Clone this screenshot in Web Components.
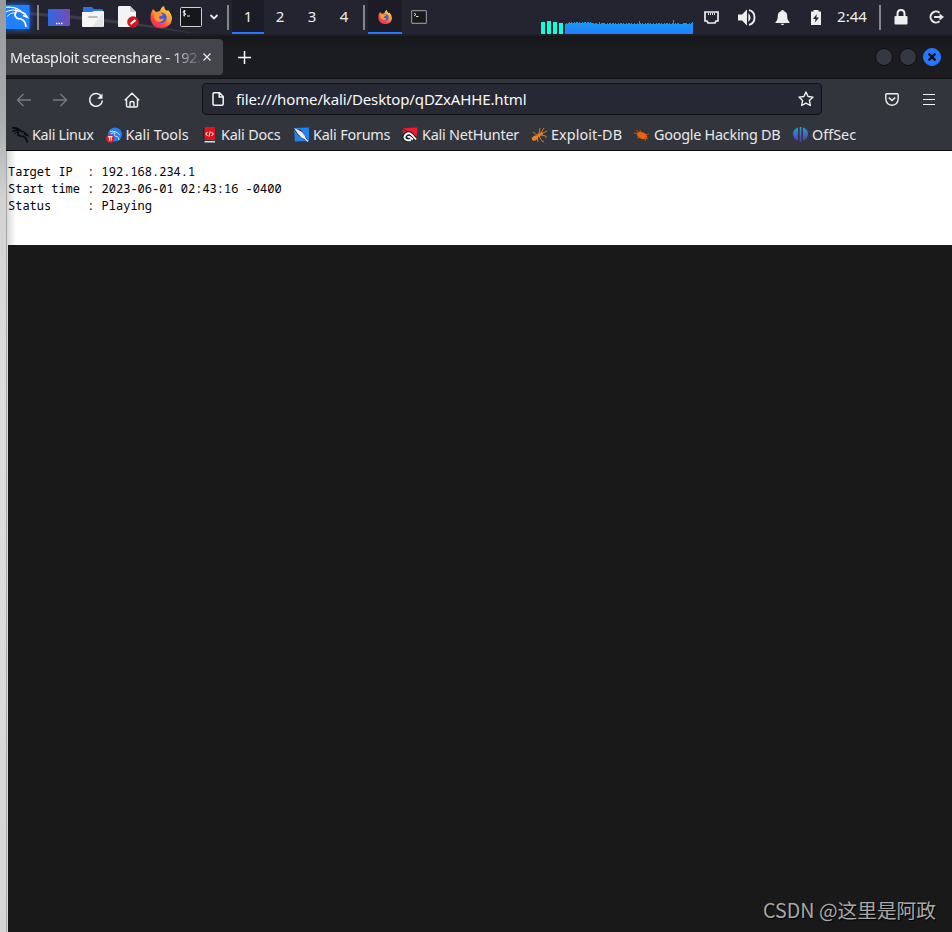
<!DOCTYPE html>
<html lang="en">
<head>
<meta charset="utf-8">
<title>Metasploit screenshare</title>
<style>
  html, body { margin: 0; height: 100%; overflow: hidden; }
  body { font-family: "Noto Sans", "Open Sans", sans-serif; background: #1a1a1a; }
</style>
</head>
<body>
<kali-desktop></kali-desktop>

<script>
const ICONS = {
  kali: [24, 24, `<rect width="23.500" height="24" fill="#2180ff"/>
    <path d="M0 2.200Q8 1.800 12 4.300L15 6M0 6.700Q5 4.500 9 5.200" fill="none" stroke="#fff" stroke-width="1.100"/>
    <path d="M9 5.200Q15 6 19 9L21 12 17 10.500M10.500 6.500Q7.500 10 10.500 12.700 12 13.800 15 14 19.500 15.500 20 22" fill="none" stroke="#fff" stroke-width="1.700"/>
    <path d="M1 11.500Q4 7.500 9.500 7.500" fill="none" stroke="#fff" stroke-width=".9"/>`],
  desktop: [22, 17, `<defs><linearGradient id="d"><stop stop-color="#2f6ae0"/><stop offset="1" stop-color="#754bb6"/></linearGradient></defs>
    <rect width="22" height="17" rx="1" fill="url(#d)"/><path d="M8 14.500h1.500M10.500 14.500H12M13 14.500h1.500" stroke="#fff" stroke-width="1.500"/>`],
  folder: [22, 20, `<path d="M1 0h9l2 2h8q1 0 1 1v5H1z" fill="#2b72e8"/><path d="M0 5h10l2-1h9q1 0 1 1v14q0 1-1 1H1q-1 0-1-1z" fill="#f5f5f5"/><path d="M21 6v14H10z" fill="#e4e4e4"/><path d="M7 10h8" stroke="#bbb" stroke-width="2" stroke-linecap="round"/>`],
  doc: [22, 22, `<path d="M1 0h11l6 6v15H1q-1 0-1-1V1z" fill="#f4f4f4"/><path d="M12 0v6h6z" fill="#c9c9c9"/><circle cx="15" cy="16" r="5.800" fill="#cf1820"/><path d="M12.500 18l5-4" stroke="#fff" stroke-width="2.200"/>`],
  firefox: [22, 22, `<defs><linearGradient id="f" x1=".9" x2=".2" y2="1"><stop stop-color="#ffe04b"/><stop offset=".45" stop-color="#ff9830"/><stop offset=".75" stop-color="#ff4144"/><stop offset="1" stop-color="#e92a6a"/></linearGradient></defs>
    <path d="M3 3l3 3 4-1Q11 1 14 0q0 3 3 5l1-1q4 4 4 9-1 8-9 9Q2 23 .5 13 .3 7 3 3z" fill="url(#f)"/>
    <circle cx="11.500" cy="11.700" r="5.200" fill="#405bdd"/><path d="M3 6l4 1h4l2 2-2 1q-2 0-2 2 2 2 5 0-1 4-5 4-5-1-5-6z" fill="#ff9633"/>`],
  terminal: [22, 20, `<rect x=".5" y=".5" width="21" height="19" rx="1" fill="#15171a" stroke="#cfcfcf"/><path d="M5.600 4Q3 3.800 3 5q0 1 1.300 1T5.600 7.500Q5.400 8.500 3 8M4.300 3v6.500M7 9h3" fill="none" stroke="#fff" stroke-width=".9"/>`],
  taskterm: [16, 14, `<rect x=".6" y=".6" width="14.800" height="12.800" rx="1" fill="#17191b" stroke="#8b8d8d" stroke-width="1.200"/><path d="M3 3l2 1.500-2 1.500M5 6.500h2.500" fill="none" stroke="#ddd"/>`],
  chevron: [10, 8, `<path d="M1.500 2L5 5.500 8.500 2" fill="none" stroke="#e8e8e8" stroke-width="1.800"/>`],
  network: [15, 13, `<path d="M1 1h13v9h-2l-1 2H4l-1-2H1z" fill="none" stroke="#eee" stroke-width="1.700"/><path d="M4.500 2v2M6.500 2v2M8.500 2v2M10.500 2v2" stroke="#ddd"/>`],
  volume: [18, 17, `<path d="M0 5.500h4l5-5v16l-5-5H0z" fill="#eee"/><path d="M10.300 4q4.500 4.500 0 9z" fill="#eee"/><path d="M11 1.200q5.500 1.300 5.500 7.300T11 15.800" fill="none" stroke="#eee" stroke-width="1.900"/>`],
  bell: [15, 15, `<path d="M7.500 0q1.300 0 1.300 1.200Q12.200 2 12.200 6q0 4.500 2.300 6v1H.5v-1Q2.800 10.500 2.800 6q0-4 3.400-4.800Q6.200 0 7.500 0zM5.500 13.800h4q-.5 1.200-2 1.200t-2-1.200z" fill="#eee"/>`],
  battery: [10, 15, `<path d="M2.500 0h5v1.500H10V15H0V1.500h2.500z" fill="#eee"/><path d="M5.800 4L2 9h2.500L4 12.500 8 7.500H5.400z" fill="#23232f"/>`],
  lock: [14, 16, `<path d="M3.500 8V5q0-4 3.500-4t3.500 4v3" fill="none" stroke="#eee" stroke-width="2"/><rect x=".5" y="7" width="13" height="8.500" rx="1" fill="#eee"/>`],
  logout: [15, 14, `<path d="M10.500 2.700A5.500 5.500 0 1 0 10.500 11.300" fill="none" stroke="#e8e8e8" stroke-width="2"/><path d="M5 7h7" stroke="#e8e8e8" stroke-width="2"/><path d="M10.500 3.500L15 7l-4.500 3.500z" fill="#e8e8e8"/>`],
  back: [16, 14, `<path d="M15 7H1.500M7.500 1l-6 6 6 6" fill="none" stroke="#77797e" stroke-width="1.400"/>`],
  forward: [16, 14, `<path d="M1 7h13.500M8.500 1l6 6-6 6" fill="none" stroke="#77797e" stroke-width="1.400"/>`],
  reload: [16, 16, `<path d="M13.500 4.500A6.400 6.400 0 1 0 14.400 8.500" fill="none" stroke="#f2f2f2" stroke-width="1.500"/><path d="M14.500 1.500v5.300H9.200z" fill="#f2f2f2"/>`],
  home: [16, 16, `<path d="M.8 8.300L8 1.200l7.200 7.100M2.500 7v6.700q0 1.300 1.300 1.300h8.400q1.300 0 1.300-1.300V7M6 15v-4q0-1.500 2-1.500t2 1.500v4" fill="none" stroke="#f2f2f2" stroke-width="1.400"/>`],
  page: [12, 14, `<path d="M1 2q0-1.200 1.200-1.200h5.300L11.200 4.500V12q0 1.200-1.200 1.200H2.200Q1 13.200 1 12zM7.200 1v4h4" fill="none" stroke="#f5f5f5" stroke-width="1.500"/>`],
  star: [16, 16, `<path d="M8 1l2.100 4.500 4.900.6-3.600 3.400.9 5L8 12.100l-4.300 2.400.9-5L1 6.100l4.900-.6z" fill="none" stroke="#f2f2f2" stroke-width="1.400" stroke-linejoin="round"/>`],
  pocket: [14, 13, `<path d="M2 .8h10q1.200 0 1.200 1.200v4q-.5 6-6.200 6.200Q1.300 12 .8 6V2Q.8.800 2 .8z" fill="none" stroke="#f2f2f2" stroke-width="1.400"/><path d="M3.800 4.500L7 7.500l3.200-3" fill="none" stroke="#f2f2f2" stroke-width="1.600"/>`],
  menu: [12, 11, `<path d="M0 .5h12M0 5.500h12M0 10.500h12" stroke="#f2f2f2" stroke-width="1.200"/>`],
  plus: [13, 13, `<path d="M6.500 0v13M0 6.500h13" stroke="#fff" stroke-width="1.500"/>`],
  close: [8, 8, `<path d="M.5.500l7 7M7.500.500l-7 7" stroke="#eee" stroke-width="1.200"/>`],
  dragon: [16, 16, `<path d="M0 1Q4 .5 6 2L9 4M.5 4.500Q5 2.500 8 3.500 12 4.500 15 8L12 7M6.500 4.500Q4.500 7.500 7.500 8.700 9 9.300 11 9.300 15 11 15 15.500" fill="none" stroke="#08090b" stroke-width="1.600"/><path d="M2 7Q4 5 7 5" fill="none" stroke="#08090b"/>`],
  tools: [16, 16, `<circle cx="9" cy="7.500" r="7" fill="#267df0"/><path d="M4 4.500Q9 3 14 8M4 7.500Q7 5 9 6 7.500 9.500 11 9.500 13 10 13 13" fill="none" stroke="#c9e3ff"/><circle cx="4.200" cy="11.500" r="4.200" fill="#e01f2a"/><path d="M2 9.700h4.500M3.500 9.700v4M5.200 9.700v4" stroke="#fff"/>`],
  docs: [12, 16, `<path d="M0 1l2-1v15l-2-1z" fill="#28203c"/><path d="M1.500 0H12v13H1.500z" fill="#df151d"/><path d="M1.500 14H12v1.500H1.500z" fill="#ddd"/><path d="M4.500 5L2.700 7l1.800 2M7.200 4.500L6 9.500M8.500 5l1.800 2-1.800 2" fill="none" stroke="#fff"/>`],
  forums: [16, 16, `<path d="M1 1L16 .5V14L2 14.500z" fill="#2381f4"/><path d="M0 1l8 2 4 6 4 6-6-3-5-4z" fill="#20242d"/><path d="M1 1l3.500 1.500L9 5l3 4 .8 3.500L9 11 5 7z" fill="#eee"/><path d="M11 10.500l4 4" stroke="#eee" stroke-width="1.200"/>`],
  hunter: [16, 16, `<path d="M1 1L15.500.5 14.500 11z" fill="#ed1c35"/><path d="M0 2l5 3-3 3z" fill="#ed1c35"/><path d="M8.500 13H5Q2 12.500 2.500 9.500 4 5.500 8 6.500L13.500 12" fill="none" stroke="#10151b" stroke-width="4.200"/><path d="M9 13.300H5.500Q2 12.700 2.500 9.500 4.300 5.500 8 6.500 10 7.500 14 12.500M5.500 10Q7.500 9 9 11L11 12.500" fill="none" stroke="#fff" stroke-width="1.900"/>`],
  exploit: [16, 16, `<g fill="#e58422"><ellipse cx="4" cy="11" rx="3.500" ry="2.200" transform="rotate(-30 4 11)"/><circle cx="8" cy="8" r="1.800"/><circle cx="10.500" cy="6.500" r="1.500"/></g><path d="M6 8L2 5M8 7l1-6M10 6l3-5M10 7l6-3M9 8l6 1v2M8 9l3 5 2 1M6 9l1 6" fill="none" stroke="#e58422" stroke-width=".9"/>`],
  bug: [16, 12, `<ellipse cx="8" cy="6.500" rx="5.500" ry="3.200" transform="rotate(25 8 6.500)" fill="#f0600d"/><path d="M4 5L0 4M5 4L2 1M7 4L6 1M11 6l4-1M11 8l3 2M10 9l2 3M6 8l-3 1" stroke="#c9520f" stroke-width=".9"/>`],
  offsec: [15, 15, `<defs><linearGradient id="o" gradientUnits="userSpaceOnUse" x1="0" x2="0" y1="0" y2="15"><stop stop-color="#16a8c9"/><stop offset="1" stop-color="#5d2dc4"/></linearGradient></defs><path d="M5 .5v13Q0 12 0 7T5 .5zM6.700 0h1.700v15H6.700zM10 .5Q15 2 15 7t-5 6.500z" fill="url(#o)"/>`]
};

class SysIcon extends HTMLElement {
  connectedCallback() {
    const [w, h, body] = ICONS[this.getAttribute('name')];
    const size = this.getAttribute('size');
    const width = size || w;
    const height = size ? size * h / w : h;
    this.attachShadow({ mode: 'open' }).innerHTML = `
      <style>
        :host { display: inline-flex; flex: none; }
        svg { display: block; overflow: visible; }
      </style>
      <svg width="${width}" height="${height}" viewBox="0 0 ${w} ${h}">${body}</svg>`;
  }
}

// One slot of the top panel; "sep" draws a divider, "active" the blue underline
class PanelItem extends HTMLElement {
  connectedCallback() {
    this.attachShadow({ mode: 'open' }).innerHTML = `
      <style>
        :host { display: flex; flex: none; box-sizing: border-box; width: ${this.getAttribute('width')}px; height: 34px; align-items: center; justify-content: center; }
        :host([active]) { background: #1c1c27; border-bottom: 2px solid #2777ff; padding-top: 2px; }
        :host([text]) { padding-bottom: 2px; }
        :host([text][active]) { padding: 0; }
        :host([sep])::before { content: ""; width: 2px; height: 25px; background: #85868c; }
      </style>
      <slot></slot>`;
  }
}

class CpuGraph extends HTMLElement {
  connectedCallback() {
    // sample heights in px, one per bar
    const heights = [];
    for (let i = 0; i < 128; i++) {
      const base = i < 4 ? 10 : i < 28 ? 11.5 : 10.5;
      heights.push(Math.round(base + Math.sin(i * 2.3) * 0.6 + Math.sin(i * 0.7) * 0.4));
    }
    heights[34] = 12;
    heights[74] = 13;
    heights[108] = 14;
    heights[127] = 12;
    const bars = heights.map((h, i) => `<rect x="${24 + i}" y="${14 - h}" width="1" height="${h}"/>`).join('');
    this.attachShadow({ mode: 'open' }).innerHTML = `
      <style>
        :host { display: block; flex: none; width: 152px; height: 14px; align-self: flex-end; }
        svg { display: block; }
      </style>
      <svg width="152" height="14">
        <defs>
          <linearGradient id="g" gradientUnits="userSpaceOnUse" x1="0" x2="0" y1="0" y2="14"><stop stop-color="#12a0ef"/><stop offset="1" stop-color="#287cff"/></linearGradient>
        </defs>
        <path d="M0 2h4v12H0zM6 1h4v13H6zM12 2h4v12h-4zM18 3h4v11h-4z" fill="#0fffdc"/>
        <g fill="url(#g)" shape-rendering="crispEdges">${bars}</g>
      </svg>`;
  }
}

class TopPanel extends HTMLElement {
  connectedCallback() {
    this.attachShadow({ mode: 'open' }).innerHTML = `
      <style>
        :host { display: flex; flex: none; height: 36px; box-sizing: border-box; border-bottom: 2px solid #1e1f26; background: #232430; color: #eee; font-size: 15px; overflow: hidden; align-items: flex-start; position: relative; }
        .streak { position: absolute; left: 0; top: 0; }
        panel-item { position: relative; }
        .kali { padding-bottom: 1px; filter: drop-shadow(0 0 3px #1670ee); }
        .fill { flex: 1; }
        .out { padding-left: 6px; }
      </style>
      <svg class="streak" width="230" height="34"><path d="M22 12Q110 17 192 34 110 22 22 15z" fill="#3b3c45"/></svg>
      <panel-item class="kali" width="24"><sys-icon name="kali"></sys-icon></panel-item>
      <panel-item sep width="16"></panel-item>
      <panel-item width="26"><sys-icon name="desktop"></sys-icon></panel-item>
      <panel-item width="42"><sys-icon name="folder"></sys-icon></panel-item>
      <panel-item width="30"><sys-icon name="doc"></sys-icon></panel-item>
      <panel-item width="34"><sys-icon name="firefox"></sys-icon></panel-item>
      <panel-item width="26"><sys-icon name="terminal"></sys-icon></panel-item>
      <panel-item width="20"><sys-icon name="chevron"></sys-icon></panel-item>
      <panel-item sep width="8"></panel-item>
      <panel-item text active width="32">1</panel-item>
      <panel-item text width="32">2</panel-item>
      <panel-item text width="32">3</panel-item>
      <panel-item text width="32">4</panel-item>
      <panel-item sep width="8"></panel-item>
      <panel-item active width="34"><sys-icon name="firefox" size="14"></sys-icon></panel-item>
      <panel-item width="34"><sys-icon name="taskterm"></sys-icon></panel-item>
      <span class="fill"></span>
      <cpu-graph></cpu-graph>
      <panel-item width="37"><sys-icon name="network"></sys-icon></panel-item>
      <panel-item width="34"><sys-icon name="volume"></sys-icon></panel-item>
      <panel-item width="36"><sys-icon name="bell"></sys-icon></panel-item>
      <panel-item width="32"><sys-icon name="battery"></sys-icon></panel-item>
      <panel-item text width="40">2:44</panel-item>
      <panel-item sep width="16"></panel-item>
      <panel-item width="26"><sys-icon name="lock"></sys-icon></panel-item>
      <panel-item class="out" width="38"><sys-icon name="logout"></sys-icon></panel-item>`;
  }
}

class TabStrip extends HTMLElement {
  connectedCallback() {
    this.attachShadow({ mode: 'open' }).innerHTML = `
      <style>
        :host { display: flex; flex: none; align-items: center; box-sizing: border-box; height: 43px; padding-right: 11px; background: linear-gradient(#16171a, #1b1c20 12px); border-bottom: 1px solid #101114; }
        .tab { display: flex; align-items: center; box-sizing: border-box; width: 217px; height: 36px; padding: 0 12px 0 4px; background: #43454b; border-radius: 0 4px 4px 0; font-size: 14.4px; letter-spacing: -.25px; color: #f0f0f0; }
        .title { flex: none; width: 190px; margin-right: 3px; white-space: nowrap; -webkit-mask: linear-gradient(to right, #000 160px, transparent 194px); mask: linear-gradient(to right, #000 160px, transparent 194px); }
        .plus { margin-left: 15px; }
        .buttons { display: flex; gap: 6px; margin-left: auto; }
        .buttons span { display: flex; align-items: center; justify-content: center; box-sizing: border-box; width: 18px; height: 18px; border-radius: 50%; background: #343842; border: 1px solid #0b0c0e; }
        .buttons .x { background: #2777ff; border-color: #2777ff; }
      </style>
      <div class="tab"><span class="title">Metasploit screenshare - 192.</span><sys-icon name="close"></sys-icon></div>
      <sys-icon class="plus" name="plus"></sys-icon>
      <div class="buttons"><span></span><span></span><span class="x"><svg width="8" height="8"><path d="M.5.500l7 7M7.500.500l-7 7" stroke="#10131a" stroke-width="2.400"/></svg></span></div>`;
  }
}

class NavBar extends HTMLElement {
  connectedCallback() {
    this.attachShadow({ mode: 'open' }).innerHTML = `
      <style>
        :host { display: flex; flex: none; align-items: center; box-sizing: border-box; height: 41px; padding-bottom: 1px; background: #33353c; }
        .nav { display: flex; align-items: center; gap: 20px; margin-left: 10px; width: 186px; padding-top: 2px; }
        .url { display: flex; align-items: center; box-sizing: border-box; width: 620px; height: 32px; padding: 0 7px 0 9px; background: #262833; border: 1px solid #0f1014; border-radius: 4px; font-size: 15px; letter-spacing: -.13px; color: #fafafa; }
        .url span { flex: 1; margin-left: 12px; }
        .end { display: flex; align-items: center; gap: 24px; margin-left: 63px; }
      </style>
      <div class="nav"><sys-icon name="back"></sys-icon><sys-icon name="forward"></sys-icon><sys-icon name="reload"></sys-icon><sys-icon name="home"></sys-icon></div>
      <div class="url"><sys-icon name="page"></sys-icon><span>file:///home/kali/Desktop/qDZxAHHE.html</span><sys-icon name="star"></sys-icon></div>
      <div class="end"><sys-icon name="pocket"></sys-icon><sys-icon name="menu"></sys-icon></div>`;
  }
}

class BookmarkLink extends HTMLElement {
  connectedCallback() {
    this.attachShadow({ mode: 'open' }).innerHTML = `
      <style>
        :host { display: flex; flex: none; box-sizing: border-box; align-items: center; gap: 4px; width: ${this.getAttribute('width')}px; white-space: nowrap; letter-spacing: ${this.getAttribute('spacing') || 0}px; }
        .icon { display: flex; justify-content: center; width: 16px; padding-top: 1px; }
      </style>
      <span class="icon"><sys-icon name="${this.getAttribute('icon')}"></sys-icon></span><slot></slot>`;
  }
}

class BookmarkBar extends HTMLElement {
  connectedCallback() {
    this.attachShadow({ mode: 'open' }).innerHTML = `
      <style>
        :host { display: flex; flex: none; align-items: center; box-sizing: border-box; height: 31px; padding: 0 0 2px 6px; background: #33353c; border-bottom: 1px solid #08090b; font-size: 14.4px; color: #e9e9ea; }
      </style>
      <bookmark-link icon="dragon" width="93.500" spacing="-.33">Kali Linux</bookmark-link>
      <bookmark-link icon="tools" width="95.500">Kali Tools</bookmark-link>
      <bookmark-link icon="docs" width="92" spacing="-.2">Kali Docs</bookmark-link>
      <bookmark-link icon="forums" width="109" spacing="-.2">Kali Forums</bookmark-link>
      <bookmark-link icon="hunter" width="129" spacing="-.22">Kali NetHunter</bookmark-link>
      <bookmark-link icon="exploit" width="103" spacing=".08">Exploit-DB</bookmark-link>
      <bookmark-link icon="bug" width="158" spacing="-.25">Google Hacking DB</bookmark-link>
      <bookmark-link icon="offsec" width="90">OffSec</bookmark-link>`;
  }
}

class ScreenSharePage extends HTMLElement {
  connectedCallback() {
    this.attachShadow({ mode: 'open' }).innerHTML = `
      <style>
        :host { display: flex; flex-direction: column; flex: 1; background: linear-gradient(to right, #d8d8d8, #fff 9px); padding-left: 1px; }
        pre { box-sizing: border-box; height: 94px; margin: 0; padding-top: 12px; font: 12px/17px "Noto Sans Mono", "DejaVu Sans Mono", monospace; color: #000; }
        .screen { display: flex; flex: 1; align-items: flex-end; justify-content: flex-end; background: #191919; }
        .mark { margin: 0 16px 7px 0; font: 19.700px/30px "Noto Sans CJK SC", sans-serif; color: #a9a9a9; text-shadow: 1px 1px 1px #000; white-space: nowrap; }
      </style>
      <pre>Target IP  : 192.168.234.1
Start time : 2023-06-01 02:43:16 -0400
Status     : Playing</pre>
      <div class="screen"><span class="mark" lang="zh-CN">CSDN @这里是阿政</span></div>`;
  }
}

class KaliDesktop extends HTMLElement {
  connectedCallback() {
    this.attachShadow({ mode: 'open' }).innerHTML = `
      <style>
        :host { display: flex; height: 100vh; }
        .edge { flex: none; box-sizing: border-box; width: 7px; background: linear-gradient(#97999d, #abadb0 120px, #d3d3d3 200px, #dedede 400px, #d5d6d8); border-right: 1px solid #a4a4a4; }
        .window { display: flex; flex-direction: column; flex: 1; min-width: 0; }
        top-panel, tab-strip, nav-bar, bookmark-bar { margin-left: -1px; }
      </style>
      <div class="edge"></div>
      <div class="window">
        <top-panel></top-panel>
        <tab-strip></tab-strip>
        <nav-bar></nav-bar>
        <bookmark-bar></bookmark-bar>
        <screen-share-page></screen-share-page>
      </div>`;
  }
}

customElements.define('sys-icon', SysIcon);
customElements.define('panel-item', PanelItem);
customElements.define('cpu-graph', CpuGraph);
customElements.define('top-panel', TopPanel);
customElements.define('tab-strip', TabStrip);
customElements.define('nav-bar', NavBar);
customElements.define('bookmark-link', BookmarkLink);
customElements.define('bookmark-bar', BookmarkBar);
customElements.define('screen-share-page', ScreenSharePage);
customElements.define('kali-desktop', KaliDesktop);
</script>
</body>
</html>
